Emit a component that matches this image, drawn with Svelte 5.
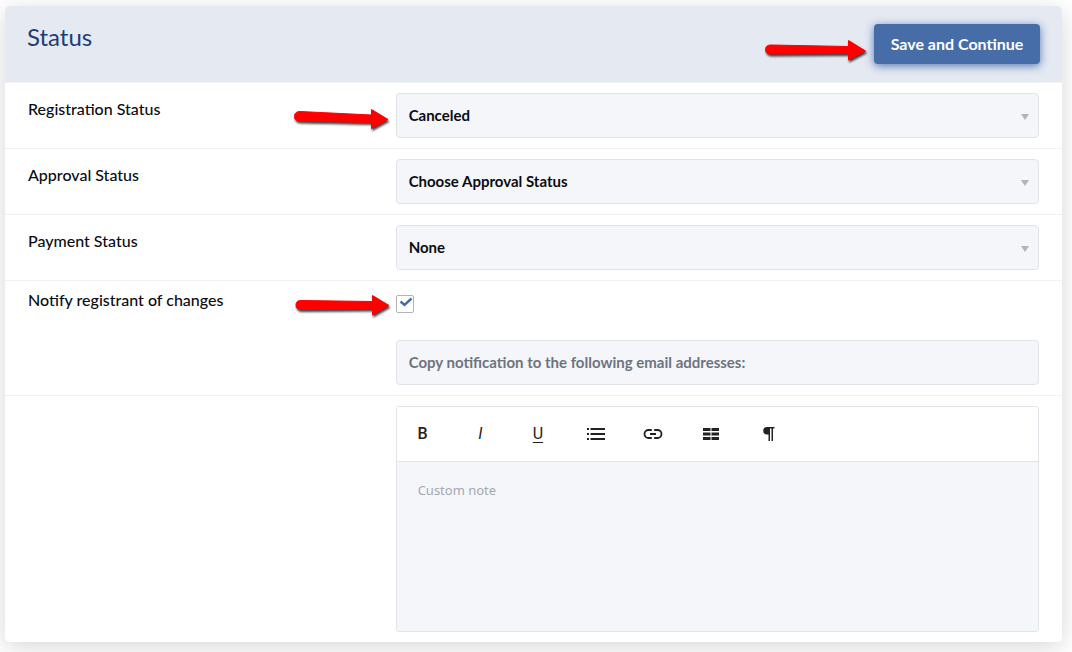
<script lang="ts">
  let registration = $state('Canceled');
  let approval = $state('Choose Approval Status');
  let payment = $state('None');
  let notify = $state(true);
  let emails = $state('');
  let note = $state('');
</script>

{#snippet pointer(d: string)}
  <svg class="pointer" width="108" height="32" viewBox="0 0 108 32" aria-hidden="true">
    <path {d} fill="#fe0000" stroke="#fe0000" stroke-width="1" stroke-linejoin="round" />
  </svg>
{/snippet}

{#snippet caret()}
  <svg class="caret" width="8" height="6" viewBox="0 0 8 6" aria-hidden="true">
    <path d="M0 0h8L4 6z" fill="#b4b4b4" />
  </svg>
{/snippet}

<form class="card">
  <header>
    <h1>Status</h1>
    <div class="anchor save">
      {@render pointer('M5 11C1 11-.500 13-.500 15.500C-.500 18.500 1.500 20 5 20L82.500 19.500V26L99.500 17L82.500 6.500V12.500z')}
      <button class="primary" type="button">Save and Continue</button>
    </div>
  </header>

  <div class="row">
    <label for="registration">Registration Status</label>
    <div class="anchor field">
      {@render pointer('M4 10.500C0 10.500-1.500 12.500-1.500 15.500C-1.500 18.500 0 20 4 20L75.500 21.500V27.500L92 18.500L75.500 8.500V14z')}
      <select id="registration" bind:value={registration}>
        <option>Canceled</option>
      </select>
      {@render caret()}
    </div>
  </div>

  <div class="row">
    <label for="approval">Approval Status</label>
    <div class="anchor field">
      <select id="approval" bind:value={approval}>
        <option>Choose Approval Status</option>
      </select>
      {@render caret()}
    </div>
  </div>

  <div class="row">
    <label for="payment">Payment Status</label>
    <div class="anchor field">
      <select id="payment" bind:value={payment}>
        <option>None</option>
      </select>
      {@render caret()}
    </div>
  </div>

  <div class="row">
    <label class="notify-label" for="notify">Notify registrant of changes</label>
    <div class="notify">
      <div class="anchor check">
        {@render pointer('M5 11.500C1 11.500 0 13.500 0 16C0 19 1.500 20.500 5 20.500L76.500 20V26L93 16.500L76.500 6.500V12.500z')}
        <input id="notify" type="checkbox" bind:checked={notify} />
        {#if notify}
          <svg class="tick" width="18" height="18" viewBox="0 0 18 18" aria-hidden="true">
            <path d="M4.500 6.500L8.500 10L15.500 3.500" fill="none" stroke="#436ca9" stroke-width="2.400" />
          </svg>
        {/if}
      </div>
      <input
        class="emails"
        type="text"
        bind:value={emails}
        aria-label="Copy notification to the following email addresses:"
        placeholder="Copy notification to the following email addresses:"
      />
    </div>
  </div>

  <div class="row">
    <div></div>
    <div class="editor">
      <div class="toolbar">
        <div class="tools">
          <button class="tool bold" type="button">B</button>
          <button class="tool italic" type="button">I</button>
          <button class="tool underline" type="button">U</button>
          <button class="tool" type="button" aria-label="List">
            <svg width="20" height="14" viewBox="0 0 20 14" fill="#222">
              <path d="M4.500 1H19v2H4.500zM4.500 6H19v2H4.500zM4.500 11H19v2H4.500zM1 1h2v2H1zM1 6h2v2H1zM1 11h2v2H1z" />
            </svg>
          </button>
          <button class="tool" type="button" aria-label="Link">
            <svg width="20" height="14" viewBox="0 0 20 14" fill="none" stroke="#222" stroke-width="1.800">
              <path d="M8.800 3H5.500a4 4 0 0 0 0 8h3.300M11.200 3h3.300a4 4 0 0 1 0 8h-3.300M7 7h6" />
            </svg>
          </button>
          <button class="tool" type="button" aria-label="Table">
            <svg width="20" height="14" viewBox="0 0 20 14" fill="#222">
              <path d="M2 1h7.500v3H2zM10.500 1H18v3h-7.500zM2 5.500h7.500v3H2zM10.500 5.500H18v3h-7.500zM2 10h7.500v3H2zM10.500 10H18v3h-7.500z" />
            </svg>
          </button>
          <button class="tool" type="button" aria-label="Paragraph">
            <svg width="20" height="14" viewBox="0 0 20 14" fill="#222">
              <path d="M8 0H15.500v1.500H14V14H12.500V1.500H11V14H9.500V7.500H8a3.750 3.750 0 0 1 0-7.500z" />
            </svg>
          </button>
        </div>
      </div>
      <textarea bind:value={note} aria-label="Custom note" placeholder="Custom note"></textarea>
    </div>
  </div>
</form>

<style>
  :global(body) {
    background: #fff;
  }

  .card,
  .card * {
    box-sizing: border-box;
  }

  .card {
    margin: 6px 10px 10px 5px;
    border-radius: 5px;
    background: #fff;
    box-shadow: 0 5px 24px rgba(0, 0, 0, 0.16);
    font-family: "Lato", sans-serif;
    font-size: 16px;
    color: #0a0c12;
  }

  header {
    display: flex;
    justify-content: space-between;
    align-items: flex-start;
    height: 77px;
    padding: 18px 22px;
    border-bottom: 1px solid #f1f3f6;
    border-radius: 5px 5px 0 0;
    background: #e4e9f2;
  }

  h1 {
    margin: 0;
    font-family: "Lato", sans-serif;
    font-size: 24px;
    line-height: 26px;
    font-weight: 400;
    color: #1f3c76;
  }

  .anchor {
    position: relative;
  }

  .pointer {
    position: absolute;
    right: 100%;
    overflow: visible;
    pointer-events: none;
    filter: drop-shadow(1px 2px 1px rgba(0, 0, 0, 0.75));
  }

  .save .pointer {
    top: 10px;
  }

  .field .pointer {
    top: 8px;
    margin-right: -8px;
  }

  .check .pointer {
    top: -6px;
    margin-right: -8px;
  }

  .primary {
    min-width: 166px;
    height: 40px;
    padding: 0 12px 2px;
    border: 0;
    border-radius: 4px;
    background: #466da8;
    box-shadow: 0 2px 8px rgba(50, 94, 166, 0.8);
    color: #fff;
    font-family: "Lato", sans-serif;
    font-size: 16px;
    font-weight: 700;
  }

  .row {
    display: grid;
    grid-template-columns: 4fr 7fr;
    padding: 10px 23px;
    border-bottom: 1px solid #f1f2f4;
  }

  .row:last-child {
    border-bottom: 0;
  }

  .row > label {
    padding-top: 6px;
    line-height: 20px;
    font-weight: 500;
  }

  .row > .notify-label {
    padding-top: 0;
    line-height: 18px;
  }

  select,
  .emails {
    display: block;
    width: 100%;
    height: 45px;
    margin: 0;
    padding: 0 12px 2px;
    border: 1px solid #e0e4e9;
    border-radius: 4px;
    background: #f5f6fa;
    color: #0a0c12;
    font-family: "Lato", sans-serif;
    font-size: 15px;
    font-weight: 700;
    appearance: none;
  }

  .emails::placeholder {
    color: #6d747e;
    opacity: 1;
  }

  .caret {
    position: absolute;
    top: 21px;
    right: 10px;
    pointer-events: none;
  }

  .notify {
    display: grid;
    gap: 27px;
    padding-top: 4px;
  }

  .check {
    width: 18px;
    height: 18px;
  }

  .check input {
    display: block;
    width: 18px;
    height: 18px;
    margin: 0;
    border: 1px solid #b4b4b4;
    border-radius: 2px;
    background: #fff;
    appearance: none;
  }

  .tick {
    position: absolute;
    top: 0;
    left: 0;
    pointer-events: none;
  }

  .editor {
    border: 1px solid #e1e4e8;
    border-radius: 3px;
    background: #f5f6fa;
    overflow: hidden;
  }

  .toolbar {
    height: 55px;
    border-bottom: 1px solid #e1e4e8;
    background: #fff;
  }

  .tools {
    display: flex;
    justify-content: space-between;
    max-width: 398px;
    height: 53px;
  }

  .tool {
    display: flex;
    align-items: center;
    justify-content: center;
    width: 52px;
    padding: 0;
    border: 0;
    background: none;
    color: #222;
    font-family: "Roboto", sans-serif;
    font-size: 16px;
  }

  .bold {
    font-weight: 500;
  }

  .italic {
    font-style: italic;
  }

  .underline {
    text-decoration: underline;
    text-decoration-thickness: 1px;
    text-underline-offset: 3px;
  }

  textarea {
    display: block;
    width: 100%;
    height: 169px;
    margin: 0;
    padding: 18px 21px;
    border: 0;
    background: #f5f6fa;
    color: #222;
    font-family: "Noto Sans", sans-serif;
    font-size: 13px;
    line-height: 20px;
    resize: none;
  }

  textarea::placeholder {
    color: #a3a9b1;
    opacity: 1;
  }
</style>
